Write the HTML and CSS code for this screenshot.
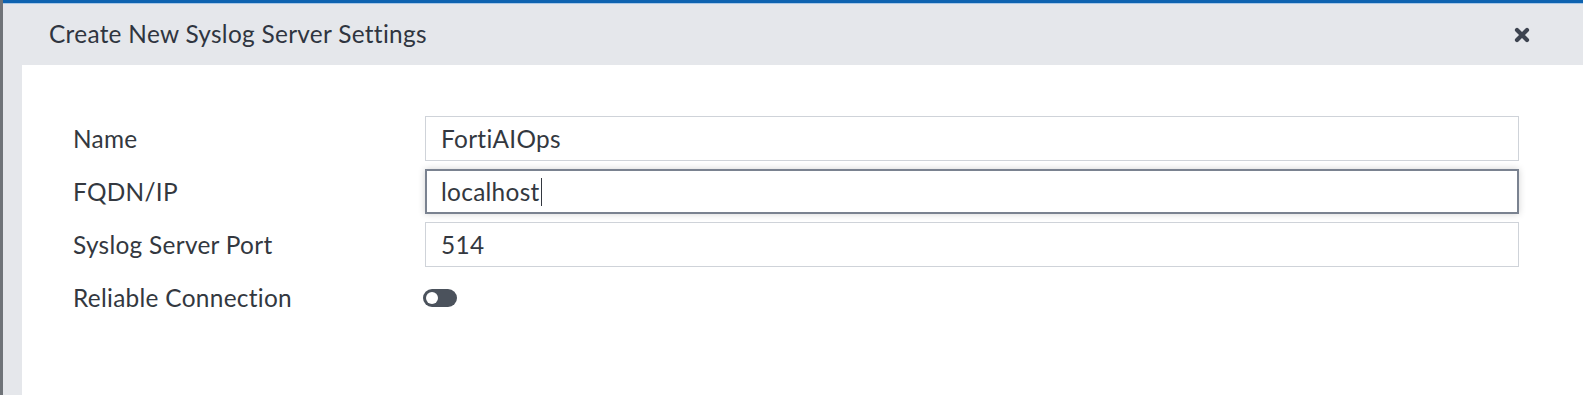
FILE: index.html
```html
<!DOCTYPE html>
<html>
<head>
<meta charset="utf-8">
<link rel="stylesheet" href="styles.css">
</head>
<body>
<div class="frame">
  <div class="topline"></div>
  <div class="dialog">
    <div class="header">
      <div class="title">Create New Syslog Server Settings</div>
      <div class="close" aria-label="close">
        <svg width="16" height="16" viewBox="0 0 16 16"><path d="M3 3 L13 13 M13 3 L3 13" stroke="#3d4450" stroke-width="4.2" stroke-linecap="round"/></svg>
      </div>
    </div>
    <div class="body-row">
      <div class="gutter"></div>
      <div class="content">
        <div class="form">
          <div class="row">
            <label class="label">Name</label>
            <div class="input">FortiAIOps</div>
          </div>
          <div class="row">
            <label class="label">FQDN/IP</label>
            <div class="input focused">localhost<span class="caret"></span></div>
          </div>
          <div class="row">
            <label class="label">Syslog Server Port</label>
            <div class="input">514</div>
          </div>
          <div class="row toggle-row">
            <label class="label">Reliable Connection</label>
            <div class="toggle"><span class="knob"></span></div>
          </div>
        </div>
      </div>
    </div>
  </div>
</div>
</body>
</html>
```

FILE: styles.css
```css
html, body {
  margin: 0;
  padding: 0;
  width: 1583px;
  height: 395px;
  overflow: hidden;
  background: #ffffff;
  font-family: Lato, "Liberation Sans", sans-serif;
  color: #333840;
}
.frame {
  display: flex;
  flex-direction: column;
  height: 395px;
  border-left: 3px solid #6f7378;
  box-sizing: border-box;
}
.topline {
  height: 3px;
  background: #0e63b0;
  border-bottom: 1px solid #a8c8e8;
  flex: none;
}
.dialog {
  flex: 1;
  display: flex;
  flex-direction: column;
}
.header {
  height: 61px;
  background: #e5e7eb;
  display: flex;
  align-items: center;
  justify-content: space-between;
  padding: 0 53px 0 46px;
  flex: none;
}
.title {
  font-size: 24.4px;
  letter-spacing: 0.3px;
  color: #2f3540;
  margin-top: -2px;
}
.close {
  display: flex;
  align-items: center;
  justify-content: center;
  width: 16px;
  height: 16px;
}
.body-row {
  flex: 1;
  display: flex;
}
.gutter {
  width: 19px;
  background: #e5e7eb;
  flex: none;
}
.content {
  flex: 1;
  background: #ffffff;
  padding: 51px 0 0 51px;
}
.form {
  display: flex;
  flex-direction: column;
  gap: 8px;
  width: 1446px;
}
.row {
  display: flex;
  align-items: center;
  height: 45px;
}
.label {
  width: 352px;
  font-size: 24.4px;
  letter-spacing: 0.3px;
  color: #333840;
  flex: none;
}
.input {
  flex: 1;
  height: 45px;
  box-sizing: border-box;
  border: 1px solid #cfd3d9;
  padding: 0 15px;
  display: flex;
  align-items: center;
  font-size: 24.4px;
  letter-spacing: 0.3px;
  color: #333840;
  background: #fff;
}
.input.focused {
  border: 2px solid #7a8290;
  padding: 0 14px;
  box-shadow: 0 0 7px rgba(0,0,0,0.18);
}
.caret {
  display: inline-block;
  width: 1px;
  height: 28px;
  background: #333840;
  margin-left: 1px;
}
.toggle {
  width: 34px;
  height: 18px;
  border-radius: 9px;
  background: #4b525c;
  box-sizing: border-box;
  padding: 3px;
  display: flex;
  align-items: center;
  margin-left: -2px;
}
.knob {
  width: 12px;
  height: 12px;
  border-radius: 50%;
  background: #ffffff;
}
```
